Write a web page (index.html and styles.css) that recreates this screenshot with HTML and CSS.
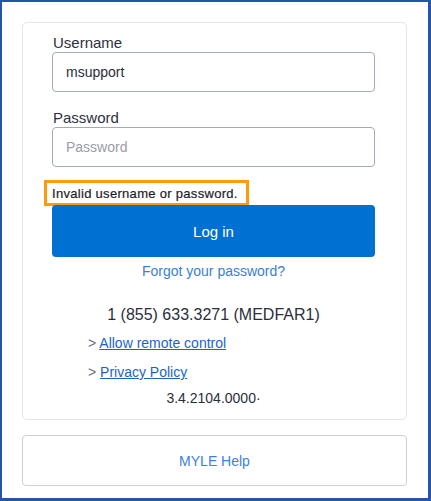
FILE: index.html
```html
<!DOCTYPE html>
<html lang="en">
<head>
<meta charset="utf-8">
<title>Log in</title>
<link rel="stylesheet" href="styles.css">
</head>
<body>
<div class="frame">
  <div class="card">
    <form class="form">
      <label class="label" for="user">Username</label>
      <input class="field" id="user" type="text" value="msupport">
      <label class="label label-gap" for="pass">Password</label>
      <input class="field field-empty" id="pass" type="password" placeholder="Password">
      <div class="error">Invalid username or password.</div>
      <button class="login" type="button">Log in</button>
      <a class="forgot" href="#">Forgot your password?</a>
    </form>
    <div class="phone">1 (855) 633.3271 (MEDFAR1)</div>
    <ul class="links">
      <li class="link-row">&gt; <a href="#">Allow remote control</a></li>
      <li class="link-row link-row-2">&gt; <a href="#">Privacy Policy</a></li>
    </ul>
    <div class="version">3.4.2104.0000·</div>
  </div>
  <div class="help"><a href="#">MYLE Help</a></div>
</div>
</body>
</html>
```

FILE: styles.css
```css
* { box-sizing: border-box; }
html, body { margin: 0; padding: 0; background: #ffffff; }
body {
  font-family: "Liberation Sans", Arial, sans-serif;
  color: #2b2e3a;
}
.frame {
  width: 431px;
  height: 501px;
  border-style: solid;
  border-color: #2456a5;
  border-width: 2px 3px 3px 2px;
  padding: 20px 21px 0 20px;
  background: #fff;
}
.card {
  border: 1px solid #e2e5ea;
  border-radius: 5px;
  padding: 11px 31px 11px 29px;
}
.form { display: flex; flex-direction: column; margin: 0; }
.label {
  display: block;
  font-size: 15px;
  line-height: 18px;
  color: #2d3040;
  padding-left: 1px;
}
.label-gap { margin-top: 17px; }
.field {
  display: block;
  width: 100%;
  height: 40px;
  border: 1px solid #a2abba;
  border-radius: 4px;
  padding: 0 13px;
  font-family: inherit;
  font-size: 14px;
  color: #2b2e3a;
  background: #fff;
  outline: none;
}
.field::placeholder { color: #9a9ea6; }
.error {
  align-self: flex-start;
  margin: 13px 0 0 -8px;
  border: 3px solid #ff9a0a;
  padding: 1px 8px 0 5px;
  height: 26px;
  font-size: 13px;
  line-height: 19px;
  letter-spacing: 0.3px;
  color: #1c1e27;
  background: #fff;
  -webkit-text-stroke: 0.2px #1c1e27;
}
.login {
  margin-top: -1px;
  height: 52px;
  border: 0;
  border-radius: 4px;
  background: #0070d2;
  color: #ffffff;
  font-family: inherit;
  font-size: 15px;
  padding-bottom: 1px;
}
.forgot {
  margin-top: 4px;
  text-align: center;
  font-size: 14px;
  line-height: 20px;
  color: #3a7fd3;
  text-decoration: none;
}
.phone {
  margin-top: 24px;
  text-align: center;
  font-size: 16px;
  line-height: 20px;
  color: #2b2e3a;
}
.links {
  list-style: none;
  margin: 8px 0 0 36px;
  padding: 0;
}
.link-row {
  font-size: 14px;
  line-height: 20px;
  color: #6b6f78;
}
.link-row-2 { margin-top: 9px; }
.link-row a { color: #1a64c8; text-decoration: underline; }
.version {
  margin-top: 6px;
  text-align: center;
  font-size: 14px;
  line-height: 20px;
  color: #2b2e3a;
}
.help {
  margin-top: 15px;
  height: 51px;
  border: 1px solid #cfd0d3;
  border-radius: 4px;
  display: flex;
  align-items: center;
  justify-content: center;
  font-size: 14px;
}
.help a { color: #3b82e0; text-decoration: none; }
```
